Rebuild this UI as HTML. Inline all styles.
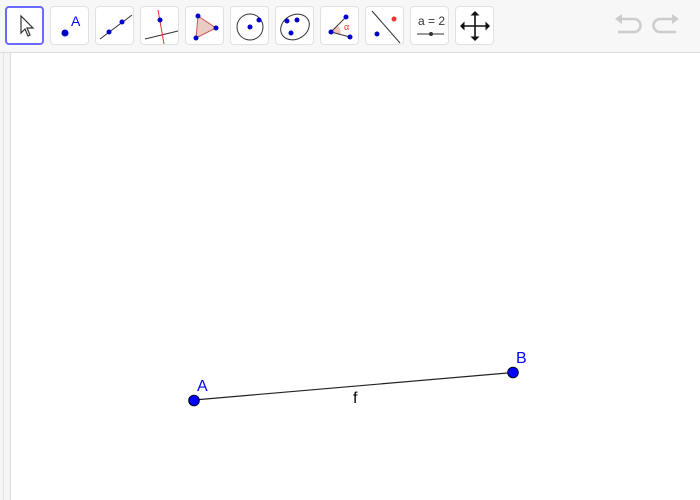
<!DOCTYPE html>
<html><head><style>
body{margin:0;width:700px;height:500px;overflow:hidden;background:#fff;font-family:"Liberation Sans",sans-serif;position:relative}
#tb{position:absolute;left:0;top:0;width:700px;height:52px;background:#f7f7f7;border-bottom:1px solid #ddd}
.b{position:absolute;top:6px;width:39px;height:39px;background:#fff;border:1px solid #e0e0e0;border-radius:4px;box-sizing:border-box}
.b svg{position:absolute;left:0;top:0}
#lp{position:absolute;left:0;top:53px;width:10px;height:447px;background:#f5f5f5;border-right:1px solid #ddd}
#lp2{position:absolute;left:3px;top:53px;width:1px;height:447px;background:#e2e2e2}
</style></head><body>
<div id="tb">
<div class="b" style="left:5px;border:2px solid #6a6aff"><svg width="36" height="36"><path d="M14 8 L14 25 L18 21 L21 28 L23 27 L20 20 L26 20 Z" fill="#fff" stroke="#333" stroke-width="1.2"/></svg></div>
<div class="b" style="left:50px"><svg width="39" height="39"><circle cx="14" cy="26" r="3.5" fill="#00c"/><text x="20" y="19" font-size="14" fill="#00f">A</text></svg></div>
<div class="b" style="left:95px"><svg width="39" height="39"><line x1="4" y1="32" x2="36" y2="8" stroke="#333"/><circle cx="13" cy="25" r="2.5" fill="#00c"/><circle cx="26" cy="15" r="2.5" fill="#00c"/></svg></div>
<div class="b" style="left:140px"><svg width="39" height="39"><line x1="4" y1="32" x2="37" y2="24" stroke="#333"/><line x1="17" y1="3" x2="23" y2="37" stroke="#e33"/><circle cx="19" cy="13" r="2.5" fill="#00c"/></svg></div>
<div class="b" style="left:185px"><svg width="39" height="39"><path d="M12 9 L30 21 L10 31 Z" fill="#eccbc4" stroke="#c55" stroke-width="1"/><circle cx="12" cy="9" r="2.5" fill="#00c"/><circle cx="30" cy="21" r="2.5" fill="#00c"/><circle cx="10" cy="31" r="2.5" fill="#00c"/></svg></div>
<div class="b" style="left:230px"><svg width="39" height="39"><circle cx="19" cy="20" r="13" fill="none" stroke="#333"/><circle cx="19" cy="20" r="2.5" fill="#00c"/><circle cx="28" cy="13" r="2.5" fill="#00c"/></svg></div>
<div class="b" style="left:275px"><svg width="39" height="39"><ellipse cx="19" cy="20" rx="15" ry="12" fill="none" stroke="#333" transform="rotate(-30 19 20)"/><circle cx="11" cy="14" r="2.5" fill="#00c"/><circle cx="21" cy="13" r="2.5" fill="#00c"/><circle cx="15" cy="26" r="2.5" fill="#00c"/></svg></div>
<div class="b" style="left:320px"><svg width="39" height="39"><path d="M10 25 L17 19 A8 8 0 0 1 19 28 Z" fill="#f2c4bc"/><line x1="10" y1="25" x2="25" y2="10" stroke="#333"/><line x1="10" y1="25" x2="29" y2="30" stroke="#333"/><circle cx="10" cy="25" r="2.5" fill="#00c"/><circle cx="25" cy="10" r="2.5" fill="#00c"/><circle cx="29" cy="30" r="2.5" fill="#00c"/><text x="23" y="23" font-size="9" fill="#e33">α</text></svg></div>
<div class="b" style="left:365px"><svg width="39" height="39"><line x1="6" y1="4" x2="34" y2="36" stroke="#333"/><circle cx="28" cy="12" r="2.5" fill="#e33"/><circle cx="11" cy="27" r="2.5" fill="#00c"/></svg></div>
<div class="b" style="left:410px"><svg width="39" height="39"><text x="7" y="18" font-size="12" fill="#333">a = 2</text><line x1="6" y1="27" x2="33" y2="27" stroke="#333"/><circle cx="20" cy="27" r="2" fill="#333"/></svg></div>
<div class="b" style="left:455px"><svg width="39" height="39"><path d="M19 7V32M7 19H32" stroke="#111" stroke-width="1.6"/><path d="M19 4l-4.5 4.5h9zM19 34l-4.5-4.5h9zM4 19l4.5-4.5v9zM34 19l-4.5-4.5v9z" fill="#111"/></svg></div>
<svg style="position:absolute;left:612px;top:12px" width="70" height="30"><g fill="none" stroke="#ccc" stroke-width="2.5"><path d="M6 7 H22 A6.5 6.5 0 0 1 22 20 H6"/><path d="M64 7 H48 A6.5 6.5 0 0 0 48 20 H64"/></g><path d="M3 7l7-5v10z M67 7l-7-5v10z" fill="#ccc"/></svg>
</div>
<div id="lp"></div><div id="lp2"></div>
<svg style="position:absolute;left:0;top:0" width="700" height="500">
<line x1="194" y1="400" x2="513" y2="372.5" stroke="#222" stroke-width="1.2"/>
<circle cx="194" cy="400.5" r="5.3" fill="#00f" stroke="#002" stroke-width="1"/>
<circle cx="513" cy="372.5" r="5.3" fill="#00f" stroke="#002" stroke-width="1"/>
<text x="197" y="391" font-size="16" fill="#00f" font-family="Liberation Sans">A</text>
<text x="516" y="363" font-size="16" fill="#00f" font-family="Liberation Sans">B</text>
<text x="353" y="403" font-size="16" fill="#000" font-family="Liberation Sans">f</text>
</svg>
</body></html>
